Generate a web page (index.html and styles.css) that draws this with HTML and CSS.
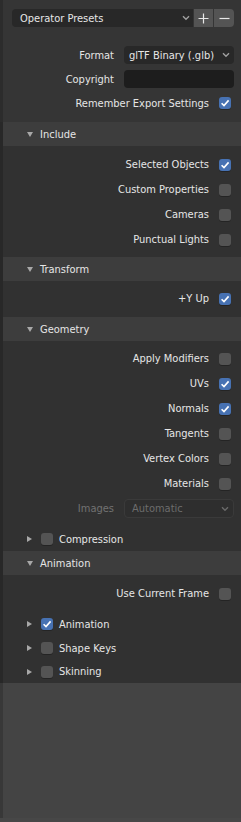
FILE: index.html
```html
<!DOCTYPE html>
<html>
<head>
<meta charset="utf-8">
<link rel="stylesheet" href="styles.css">
</head>
<body>
<div class="region">
  <div class="sec top">
    <div class="presets">
      <div class="preset-menu"><span>Operator Presets</span><svg class="chev" width="8" height="6" viewBox="0 0 8 6"><path d="M1 1.2 L4 4.2 L7 1.2" fill="none" stroke="#a0a0a0" stroke-width="1.4"/></svg></div>
      <div class="pbtn plus"><svg width="11" height="11" viewBox="0 0 11 11"><path d="M5.5 0.5 V10.5 M0.5 5.5 H10.5" stroke="#e8e8e8" stroke-width="1.2"/></svg></div>
      <div class="pbtn minus"><svg width="11" height="11" viewBox="0 0 11 11"><path d="M0.5 5.5 H10.5" stroke="#e8e8e8" stroke-width="1.2"/></svg></div>
    </div>
  </div>

  <div class="sec main">
    <div class="prop"><span class="lbl">Format</span><div class="field menu"><span>glTF Binary (.glb)</span><svg class="chev" width="8" height="6" viewBox="0 0 8 6"><path d="M1 1.2 L4 4.2 L7 1.2" fill="none" stroke="#a0a0a0" stroke-width="1.4"/></svg></div></div>
    <div class="prop"><span class="lbl">Copyright</span><div class="field text"></div></div>
    <div class="check main-check"><span>Remember Export Settings</span><span class="box on"><svg width="12" height="12" viewBox="0 0 12 12"><path d="M2.6 6.2 L5 8.6 L9.6 3.4" fill="none" stroke="#fff" stroke-width="1.6"/></svg></span></div>
  </div>

  <div class="sec panel">
    <div class="phead"><span class="tri-down"></span>Include</div>
    <div class="pbody inc">
      <div class="check"><span>Selected Objects</span><span class="box on"><svg width="12" height="12" viewBox="0 0 12 12"><path d="M2.6 6.2 L5 8.6 L9.6 3.4" fill="none" stroke="#fff" stroke-width="1.6"/></svg></span></div>
      <div class="check"><span>Custom Properties</span><span class="box"></span></div>
      <div class="check"><span>Cameras</span><span class="box"></span></div>
      <div class="check"><span>Punctual Lights</span><span class="box"></span></div>
    </div>
  </div>

  <div class="sec panel">
    <div class="phead"><span class="tri-down"></span>Transform</div>
    <div class="pbody trans">
      <div class="check"><span>+Y Up</span><span class="box on"><svg width="12" height="12" viewBox="0 0 12 12"><path d="M2.6 6.2 L5 8.6 L9.6 3.4" fill="none" stroke="#fff" stroke-width="1.6"/></svg></span></div>
    </div>
  </div>

  <div class="sec panel">
    <div class="phead"><span class="tri-down"></span>Geometry</div>
    <div class="pbody geo">
      <div class="check"><span>Apply Modifiers</span><span class="box"></span></div>
      <div class="check"><span>UVs</span><span class="box on"><svg width="12" height="12" viewBox="0 0 12 12"><path d="M2.6 6.2 L5 8.6 L9.6 3.4" fill="none" stroke="#fff" stroke-width="1.6"/></svg></span></div>
      <div class="check"><span>Normals</span><span class="box on"><svg width="12" height="12" viewBox="0 0 12 12"><path d="M2.6 6.2 L5 8.6 L9.6 3.4" fill="none" stroke="#fff" stroke-width="1.6"/></svg></span></div>
      <div class="check"><span>Tangents</span><span class="box"></span></div>
      <div class="check"><span>Vertex Colors</span><span class="box"></span></div>
      <div class="check"><span>Materials</span><span class="box"></span></div>
      <div class="prop dis"><span class="lbl">Images</span><div class="field menu off"><span>Automatic</span><svg class="chev" width="8" height="6" viewBox="0 0 8 6"><path d="M1 1.2 L4 4.2 L7 1.2" fill="none" stroke="#6a6a6a" stroke-width="1.4"/></svg></div></div>
      <div class="sub first"><span class="tri-right"></span><span class="box"></span><span>Compression</span></div>
    </div>
  </div>

  <div class="sec panel">
    <div class="phead"><span class="tri-down"></span>Animation</div>
    <div class="pbody anim">
      <div class="check"><span>Use Current Frame</span><span class="box"></span></div>
      <div class="sub first"><span class="tri-right"></span><span class="box on"><svg width="12" height="12" viewBox="0 0 12 12"><path d="M2.6 6.2 L5 8.6 L9.6 3.4" fill="none" stroke="#fff" stroke-width="1.6"/></svg></span><span>Animation</span></div>
      <div class="sub"><span class="tri-right"></span><span class="box"></span><span>Shape Keys</span></div>
      <div class="sub last"><span class="tri-right"></span><span class="box"></span><span>Skinning</span></div>
    </div>
  </div>

  <div class="sec empty"></div>
</div>
</body>
</html>
```

FILE: styles.css
```css
* { box-sizing: border-box; margin: 0; padding: 0; }
html, body { width: 241px; height: 822px; overflow: hidden; }
body {
  background: #474747;
  font-family: "DejaVu Sans Condensed", "DejaVu Sans", sans-serif;
  font-size: 11px;
  color: #e6e6e6;
}
.region { height: 818px; display: flex; flex-direction: column; background: #444444; }
.sec { border-left: 3px solid rgba(0, 0, 0, 0.17); }

.top { background: #353535; padding: 9px 7px 0 9px; }
.presets { display: flex; height: 18px; gap: 1px; }
.preset-menu {
  flex: 1; display: flex; align-items: center; justify-content: space-between;
  background: #282828; border-radius: 4px 0 0 4px; padding: 0 3px 0 8px;
}
.pbtn { width: 19px; display: flex; align-items: center; justify-content: center; background: #545454; }
.minus { width: 20px; border-radius: 0 4px 4px 0; }

.main { background: #353535; padding: 16px 0 7px; }
.prop { display: flex; align-items: center; height: 24px; }
.lbl { width: 121px; flex: none; text-align: right; padding-right: 10px; }
.field { width: 110px; flex: none; height: 18px; border-radius: 4px; display: flex; align-items: center; }
.menu { background: #282828; justify-content: space-between; padding: 0 4px 0 5px; }
.text { background: #1d1d1d; }
.chev { display: block; }
.dis { height: 25px; }
.dis .lbl { color: #727272; }
.menu.off { background: #2e2e2e; border: 1px solid #3a3a3a; color: #6c6c6c; padding-left: 7px; height: 19px; }

.check { display: flex; align-items: center; justify-content: flex-end; gap: 10px; height: 25px; padding-right: 10px; }
.main-check { height: 24px; }
.box {
  width: 12px; height: 12px; border-radius: 3px; background: #545454;
  box-shadow: 0 1px 0 rgba(0, 0, 0, 0.25); flex: none; display: block;
}
.box svg { display: block; }
.box.on { background: #4772b3; }

.panel { background: #313131; }
.phead {
  height: 24px; background: #3d3d3d; display: flex; align-items: center;
  padding-left: 24px; gap: 7px;
}
.tri-down { width: 0; height: 0; border-left: 3px solid transparent; border-right: 3px solid transparent; border-top: 5px solid #a8a8a8; }
.tri-right { width: 0; height: 0; border-top: 3px solid transparent; border-bottom: 3px solid transparent; border-left: 5px solid #a8a8a8; flex: none; }

.inc { padding: 6px 0 5px; }
.trans { padding: 5px 0 6px; }
.geo { padding: 5px 0 0; }
.anim { padding: 6px 0 0; }

.sub { display: flex; align-items: center; height: 24px; padding-left: 24px; }
.sub .box { margin-left: 9px; margin-right: 6px; }
.sub.first { margin-top: 6px; }
.sub.last { height: 23px; }

.empty { flex: 1; }
```
